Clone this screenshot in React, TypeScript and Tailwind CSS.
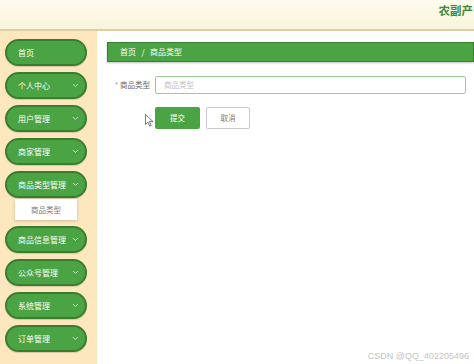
const menus = [
  { name: "首页", arrow: false },
  { name: "个人中心", arrow: true },
  { name: "用户管理", arrow: true },
  { name: "商家管理", arrow: true },
  { name: "商品类型管理", arrow: true, open: true, sub: ["商品类型"] },
  { name: "商品信息管理", arrow: true },
  { name: "公众号管理", arrow: true },
  { name: "系统管理", arrow: true },
  { name: "订单管理", arrow: true },
];

function Chevron() {
  return (
    <svg width="7" height="5" viewBox="0 0 7 5" fill="none" className="shrink-0">
      <path d="M1 1l2.5 2.5L6 1" stroke="#cfe6c6" strokeWidth="1" />
    </svg>
  );
}

export default function App() {
  return (
    <div
      className="w-[474px] h-[364px] overflow-hidden bg-white relative"
      style={{ fontFamily: '"Noto Sans CJK SC", "Noto Sans", sans-serif' }}
    >
      {/* 顶部 */}
      <header className="h-[31px] bg-gradient-to-b from-[#fdfcee] to-[#f8f4dc] border-b-2 border-[#dccfa6] flex items-center justify-end pr-[1px]">
        <div className="whitespace-nowrap text-[11.5px] font-bold text-[#3f8a32] leading-none -mt-[7px]">
          农副产
        </div>
      </header>

      <div className="flex h-[333px]">
        {/* 侧边栏 */}
        <aside className="w-[97px] shrink-0 bg-[#fde7bf] pt-[8px] pl-[5px] flex flex-col gap-[6px]">
          {menus.map((m) => (
            <div key={m.name} className="flex flex-col gap-[1px]">
              <div className="w-[82px] h-[27px] rounded-full bg-[#4ba443] border-2 border-[#3b7d2f] flex items-center justify-between pl-[11px] pr-[6px] text-white text-[8px] leading-none shadow-[0_1px_1px_rgba(0,0,0,0.15)]">
                <span>{m.name}</span>
                {m.arrow && <Chevron />}
              </div>
              {m.sub &&
                m.sub.map((s) => (
                  <div
                    key={s}
                    className="ml-[10px] w-[62px] h-[21px] bg-white flex items-center justify-center text-[7.5px] text-[#777] shadow-[0_1px_3px_rgba(0,0,0,0.2)]"
                  >
                    {s}
                  </div>
                ))}
            </div>
          ))}
        </aside>

        {/* 主内容 */}
        <main className="flex-1 pl-[10px] pt-[11px]">
          <div className="h-[20px] bg-[#4ba443] border border-[#3b7d2f] flex items-center pl-[12px] text-white text-[8px] leading-none shadow-[0_1px_2px_rgba(0,0,0,0.25)]">
            首页&nbsp;&nbsp;&nbsp;/&nbsp;&nbsp;&nbsp;商品类型
          </div>

          <div className="mt-[14px] flex items-center">
            <div className="w-[48px] pr-[5px] text-right text-[7.5px] text-[#666] leading-none whitespace-nowrap">
              <span className="text-[#999]">* </span>商品类型
            </div>
            <div className="w-[311px] h-[18px] border border-[#9ccc94] rounded-[2px] flex items-center pl-[8px] text-[7.5px] text-[#c0c0c0] leading-none">
              商品类型
            </div>
          </div>

          <div className="mt-[13px] ml-[48px] flex gap-[6px]">
            <div className="w-[45px] h-[22px] rounded-[2px] bg-[#4ba443] flex items-center justify-center text-white text-[7.5px] leading-none">
              提交
            </div>
            <div className="w-[44px] h-[22px] rounded-[2px] bg-white border border-[#c9c9c9] flex items-center justify-center text-[#777] text-[7.5px] leading-none">
              取消
            </div>
          </div>
        </main>
      </div>

      {/* 鼠标指针 */}
      <svg
        className="absolute left-[145px] top-[114px]"
        width="9"
        height="13"
        viewBox="0 0 9 13"
        fill="none"
      >
        <path d="M0.5 0.5v10l2.5-2.3 1.7 4 1.5-.7-1.7-3.9H8z" fill="#fff" stroke="#555" strokeWidth="0.8" />
      </svg>

      {/* 水印 */}
      <div className="absolute right-[5px] bottom-[3px] text-[9px] text-[#c4c4c4] leading-none" style={{ fontFamily: '"Liberation Sans", sans-serif' }}>
        CSDN @QQ_402205496
      </div>
    </div>
  );
}
